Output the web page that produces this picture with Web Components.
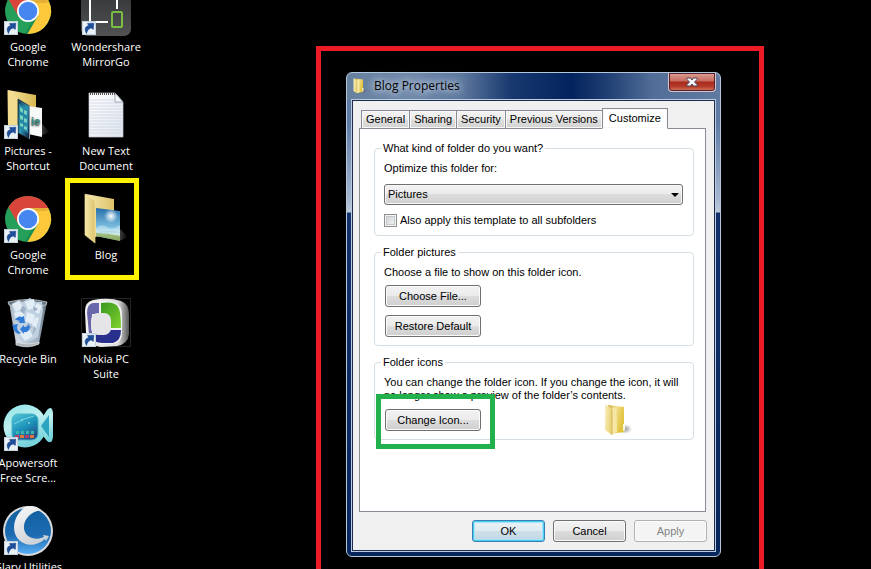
<!DOCTYPE html>
<html lang="en">
<head>
<meta charset="utf-8">
<meta name="viewport" content="width=device-width, initial-scale=1">
<title>Blog Properties</title>
<style>
  body {
    margin: 0;
    background: #000;
    font-family: "Liberation Sans", Arial, sans-serif;
    font-size: 11px;
    line-height: 13px;
    color: #000;
  }
  .windows { position: absolute; left: 346px; top: 72px; width: 375px; }
  mark-box { position: absolute; }
  .mark-dialog { left: 316px; top: 46px; width: 448px; height: 560px; --mark: #ed1c24; }
  .mark-folder { left: 65px; top: 178px; width: 74px; height: 102px; --mark: #fff200; }
  .mark-button { left: 376px; top: 394px; width: 119px; height: 55px; --mark: #22b14c; }
  .check { display: flex; align-items: center; gap: 3px; margin-top: 9px; }
  .check input {
    appearance: none;
    width: 13px;
    height: 13px;
    margin: 0;
    border: 1px solid #8e8f8f;
    background: linear-gradient(135deg, #cbcfd5, #f6f6f6);
    box-shadow: inset 0 0 0 1px #f4f4f4, inset 0 0 0 2px #c3c8ce;
  }
  .stack { display: flex; flex-direction: column; align-items: flex-start; gap: 8px; margin-top: 6px; padding-left: 1px; }
  .row { display: flex; align-items: flex-start; margin-top: 7px; padding-left: 1px; }
  .row folder-preview { margin-left: 123px; margin-top: -5px; margin-bottom: -6px; }
  .text { margin: 0; }
  .row aero-button, .stack aero-button { width: 96px; }
  aero-button[slot="footer"] { width: 73px; }
</style>
</head>
<body>

<desk-top>
  <desk-icon icon="chrome" shortcut>Google<br>Chrome</desk-icon>
  <desk-icon icon="pictures" shortcut>Pictures -<br>Shortcut</desk-icon>
  <desk-icon icon="chrome" shortcut>Google<br>Chrome</desk-icon>
  <desk-icon icon="bin">Recycle Bin</desk-icon>
  <desk-icon icon="apower" shortcut>Apowersoft<br>Free Scre...</desk-icon>
  <desk-icon icon="glary" shortcut>Glary Utilities</desk-icon>
  <desk-icon icon="mirror" shortcut>Wondershare<br>MirrorGo</desk-icon>
  <desk-icon icon="text">New Text<br>Document</desk-icon>
  <desk-icon icon="blog">Blog</desk-icon>
  <desk-icon icon="nokia" shortcut>Nokia PC<br>Suite</desk-icon>

  <aero-window slot="window" class="windows" heading="Blog Properties">
    <tab-strip tabs="General,Sharing,Security,Previous Versions,Customize" active="Customize">
      <group-box legend="What kind of folder do you want?">
        <aero-select options="Pictures,General items,Documents,Music,Videos" label="Optimize this folder for:"></aero-select>
        <label class="check"><input type="checkbox">Also apply this template to all subfolders</label>
      </group-box>
      <group-box legend="Folder pictures">
        <p class="text">Choose a file to show on this folder icon.</p>
        <div class="stack">
          <aero-button>Choose File...</aero-button>
          <aero-button>Restore Default</aero-button>
        </div>
      </group-box>
      <group-box legend="Folder icons">
        <p class="text">You can change the folder icon. If you change the icon, it will<br>no longer show a preview of the folder’s contents.</p>
        <div class="row">
          <aero-button>Change Icon...</aero-button>
          <folder-preview></folder-preview>
        </div>
      </group-box>
    </tab-strip>
    <aero-button slot="footer" kind="default">OK</aero-button>
    <aero-button slot="footer">Cancel</aero-button>
    <aero-button slot="footer" disabled>Apply</aero-button>
  </aero-window>

  <mark-box slot="window" class="mark-dialog"></mark-box>
  <mark-box slot="window" class="mark-folder"></mark-box>
  <mark-box slot="window" class="mark-button"></mark-box>
</desk-top>

<script>
// Plain open folder, used in the title bar and the icon preview
const FOLDER = `
  <defs>
    <linearGradient id="ff" x1="0" x2="1" y2=".3"><stop offset="0" stop-color="#faf0bd"/><stop offset="1" stop-color="#e9d175"/></linearGradient>
    <linearGradient id="fb" x1="0" x2="1" y2=".4"><stop offset="0" stop-color="#cfae4b"/><stop offset=".5" stop-color="#f0dc88"/><stop offset="1" stop-color="#e3c23c"/></linearGradient>
    <radialGradient id="fs"><stop offset="0" stop-color="#555" stop-opacity=".6"/><stop offset="1" stop-color="#555" stop-opacity="0"/></radialGradient>
  </defs>
  <ellipse cx="21" cy="25" rx="7" ry="5" fill="url(#fs)"/>
  <path d="M4 1 20 3V28L7 30Z" fill="url(#fb)"/>
  <path d="M12.500 3 13 28.500 8 30V4Z" fill="#f6e7a4"/>
  <path d="M1 0 8 5V31L1 26Z" fill="url(#ff)"/>
  <path d="M8 5V31" stroke="#c9a94d" stroke-width=".7"/>
  <path d="M19 20h2v6l-2 1z" fill="#fffbe0"/>`;

const BADGE = `
  <path d="M0 35h14v14H0z" fill="#e9f0f6"/>
  <path d="M.5 35.500h13v13H.5z" fill="none" stroke="#c5d2de"/>
  <path d="M4.500 47.500C2 43.500 3.200 40.500 6.600 39.600L5.500 37.500 11.800 37.200 11.300 43.400 9.200 42C6.500 42.500 5.400 44.500 4.500 47.500Z" fill="#1d4f9c" stroke="#123c80" stroke-width=".5"/>`;

const ICONS = {
  chrome: `
    <g transform="translate(24 25)">
      <circle r="23" fill="#25a05a"/>
      <path d="M20.200-11H0L9.530 5.500-.57 23A23 23 0 0 0 20.200-11Z" fill="#fdc93b"/>
      <path d="M20.200-11H0L-9.530 5.500-19.630-12A23 23 0 0 1 20.200-11Z" fill="#d9453a"/>
      <path d="M0-11H20.200L19-8H6Z" fill="#b9802a" opacity=".35"/>
      <path d="M9.530 5.500-.57 23-3 22.500 5 9Z" fill="#0d6b3c" opacity=".35"/>
      <circle r="11" fill="#fff"/><circle r="9.300" fill="#4586f1"/>
    </g>`,
  pictures: `
    <defs>
      <linearGradient id="a" x1="0" x2="1"><stop offset="0" stop-color="#f6e6a0"/><stop offset="1" stop-color="#d8b752"/></linearGradient>
      <linearGradient id="b" x2="1" y2="1"><stop offset="0" stop-color="#12344a"/><stop offset=".5" stop-color="#2f98b5"/><stop offset="1" stop-color="#113"/></linearGradient>
      <linearGradient id="s" x1="0" x2="1"><stop offset="0" stop-color="#444"/><stop offset="1" stop-color="#000"/></linearGradient>
    </defs>
    <path d="M36 32 46 42 36 46Z" fill="url(#s)"/>
    <path d="M4 0 32 5V39H8Z" fill="url(#a)"/>
    <path d="M24 16 38 18V47L24 44Z" fill="#f7f8f8"/>
    <text x="27" y="35" font-family="Liberation Sans" font-size="11" font-weight="bold" fill="#398e81">ie</text>
    <path d="M3.500 0 14 9V48L4 38Z" fill="#f2dc8d"/>
    <path d="M14 9 25.500 16V49L14 43Z" fill="url(#b)" stroke="#222b35" stroke-width=".8"/>
    <path d="m15 14 9 5v24l-9-5z" fill="#2689a8"/>
    <path d="m16 17 3 2v4l-3-2zm4 3 3 1v4l-3-1zm-4 5 3 1v4l-3-1zm4 3 3 1v4l-3-1zm-4 5 3 1v3l-3-1zm4 3 3 1v3l-3-1z" fill="#78d3bd"/>
    <path d="M25.500 16V49" stroke="#9fb3c0" stroke-width=".8"/>`,
  bin: `
    <defs>
      <linearGradient id="a" x1="0" x2="1"><stop offset="0" stop-color="#a3abb2"/><stop offset=".25" stop-color="#d3dde6"/><stop offset=".75" stop-color="#9fb0c0"/><stop offset="1" stop-color="#65727d"/></linearGradient>
    </defs>
    <path d="M5 4H43L35 46Q24 51 12 46Z" fill="url(#a)"/>
    <path d="M4 4Q24-1 43 4L42 7Q24 10 5 7Z" fill="#6a7681" stroke="#c7d0d7" stroke-width=".8"/>
    <path d="M8 6 15 2 18 4 26 0 32 4 38 4 39 12 34 39 26 43 15 42Z" fill="#bfd0e0"/>
    <g fill="#e3edf6"><path d="m8 6 7-3 5 7-8 4zM21 4l9-3 1 9-7 2zM33 5l5 3-3 8-6-3zM10 15l9-3 2 9-8 2zM23 14l8 3-2 9-8-3zM32 19l3 1-3 10-4-3zM16 36l9-5 4 7-8 5z"/></g>
    <g fill="#9db2c8"><path d="m18 8 4 2-2 6-4-3zM29 8l5 3-4 3zM12 23l6-1-2 3zM30 28l2 3-4 7zM24 25l4 4-5 4z"/></g>
    <g fill="#2f7bd6"><path d="M11 22Q14 17 18 19L20 18 21 25 15 25 16 23Q13 22 11 22ZM8 27 14 26 13 29Q13 33 17 35L14 36Q9 33 9 29ZM16 31 20 27 20 29Q24 29 24 26L26 29Q25 35 20 34V36Z"/></g>
    <path d="M12 44Q24 48 35 44V46Q24 51 12 47Z" fill="#aeb5b9" stroke="#e5e8ea" stroke-width=".7"/>`,
  apower: `
    <defs>
      <linearGradient id="a" x2=".4" y2="1"><stop offset="0" stop-color="#8be4e8"/><stop offset=".5" stop-color="#c0efef"/><stop offset="1" stop-color="#78d3dc"/></linearGradient>
      <linearGradient id="b" x2=".6" y2="1"><stop offset="0" stop-color="#54c7d9"/><stop offset=".6" stop-color="#1c91b8"/><stop offset="1" stop-color="#254f87"/></linearGradient>
    </defs>
    <path d="M36 19 43 8Q48 3 49 11V35Q48 43 43 39L36 30Z" fill="url(#a)"/>
    <circle cx="21" cy="24" r="21.500" fill="url(#a)"/>
    <path d="M37 24 45 13V35Z" fill="#2ca4bf"/>
    <rect x="8" y="12" width="26" height="26" rx="6" fill="url(#b)" stroke="#47b8c7"/>
    <path d="M10 22Q20 16 30 14" stroke="#94e9f2" stroke-width=".7" fill="none"/>
    <g fill="#39b6ae"><path d="M12 29h3v3h-3zm5 0h3v3h-3zm5 0h3v3h-3zm5 0h3v3h-3z"/></g>
    <g fill="#b33e70"><path d="M11 33h4v4h-4zm10 0h4v3h-4z"/></g>
    <g fill="#df743d"><path d="M16 33h4v3h-4zm10 0h4v3h-4z"/></g>
    <circle cx="25" cy="21" r=".7" fill="#fff"/><circle cx="18" cy="18" r=".6" fill="#fff"/>`,
  glary: `
    <defs>
      <linearGradient id="a" x2="0" y2="1"><stop offset="0" stop-color="#10609f"/><stop offset=".6" stop-color="#1e6bb2"/><stop offset="1" stop-color="#5aaff5"/></linearGradient>
      <linearGradient id="b" x2=".5" y2="1"><stop offset="0" stop-color="#f9f9f9"/><stop offset="1" stop-color="#cfd2d6"/></linearGradient>
    </defs>
    <circle cx="24" cy="25" r="25" fill="#d9dbdf"/>
    <circle cx="24" cy="25" r="23" fill="url(#a)"/>
    <path d="M21 1Q31-2 37 4C26 6 19 14 20 23 22 32 31 35 40 31L39 29 45 30 42 35 41 33C33 40 22 41 15 34 6 25 10 9 21 1Z" fill="url(#b)"/>`,
  mirror: `
    <defs><linearGradient id="a" x2="0" y2="1"><stop offset="0" stop-color="#303234"/><stop offset="1" stop-color="#505254"/></linearGradient></defs>
    <rect x="-1" y="0" width="50" height="50" rx="7" fill="url(#a)"/>
    <path d="M8 8V36H26M35 8V23" fill="none" stroke="#fff" stroke-width="2"/>
    <rect x="30" y="26" width="10" height="15" rx="1" fill="none" stroke="#79bd43" stroke-width="2"/>`,
  text: `
    <defs><linearGradient id="a" x2="1" y2="1"><stop offset="0" stop-color="#fff"/><stop offset="1" stop-color="#dfe4ee"/></linearGradient></defs>
    <path d="M7 3H33L41 12V47H7Z" fill="url(#a)" stroke="#c2c7ce" stroke-width=".7"/>
    <path d="M8 10H32M8 13H40M8 16H40M8 19H40M8 22H40M8 25H40M8 28H40M8 31H40M8 34H40M8 37H40M8 40H40M8 43H40" stroke="#cdd5e2" stroke-width=".8"/>
    <path d="M33 3V12H41Z" fill="#f7f8fa" stroke="#9299a2" stroke-width=".8"/>
    <path d="M8 4H33" stroke="#555" stroke-width="2" stroke-dasharray="1 1"/>`,
  blog: `
    <defs>
      <linearGradient id="a" x1="0" x2="1"><stop offset="0" stop-color="#f6e9ae"/><stop offset="1" stop-color="#dcc26a"/></linearGradient>
      <linearGradient id="b" x2="0" y2="1"><stop offset="0" stop-color="#286eab"/><stop offset=".6" stop-color="#7fc2e2"/><stop offset=".8" stop-color="#d4ebe5"/><stop offset="1" stop-color="#72944b"/></linearGradient>
      <radialGradient id="c"><stop offset="0" stop-color="#fff"/><stop offset=".3" stop-color="#fff" stop-opacity=".7"/><stop offset="1" stop-color="#fff" stop-opacity="0"/></radialGradient>
      <linearGradient id="s" x1="0" x2="1"><stop offset="0" stop-color="#444"/><stop offset="1" stop-color="#000"/></linearGradient>
    </defs>
    <path d="M37 34 46 43 37 47Z" fill="url(#s)"/>
    <path d="M4 0 32 5V40L12 43Z" fill="url(#a)"/>
    <path d="M14 14 38 17V47L14 42Z" fill="url(#b)"/>
    <circle cx="29" cy="22" r="7" fill="url(#c)"/>
    <path d="M14 34Q20 29 25 33T38 31V38Q28 36 14 38Z" fill="#fff" opacity=".35"/>
    <path d="M14 39Q26 39 38 42V47L14 42Z" fill="#8fae62" opacity=".75"/>
    <path d="M3 0 13 7V49L3 41Z" fill="url(#a)" stroke="#f4df98" stroke-width=".7"/>`,
  nokia: `
    <defs>
      <linearGradient id="a" x1="0" x2="1"><stop offset="0" stop-color="#f5f5f5"/><stop offset=".75" stop-color="#ddd"/><stop offset="1" stop-color="#555"/></linearGradient>
      <linearGradient id="g" x2="1" y2="1"><stop offset="0" stop-color="#38971f"/><stop offset="1" stop-color="#7fd22d"/></linearGradient>
    </defs>
    <rect x="-.5" y=".5" width="49" height="48" fill="#020202" stroke="#242424"/>
    <path d="M11 2Q27-1 39 3 47 6 47 16V36Q46 46 35 48L19 49Q5 47 4 35L3 13Q3 4 11 2Z" fill="url(#a)"/>
    <path d="M12 4Q26 1 34 5 40 8 40 17V35Q40 45 31 46H20Q8 46 7 35L5 14Q5 6 12 4Z" fill="#f2f2f2"/>
    <path d="M17 5V16H10V35L7 36 5 15Q5 6 11 5Z" fill="#6867aa"/>
    <path d="M19 5Q33 3 36 9 39 13 39 30H28V20L19 15Z" fill="url(#g)"/>
    <path d="M39 32Q39 43 31 45H21Q10 45 8 37L14 35 28 32Z" fill="#292f8d"/>
    <rect x="9" y="15" width="20" height="22" rx="7" fill="#e5e5e7"/>`
};

class DeskTop extends HTMLElement {
  constructor() {
    super();
    this.attachShadow({ mode: 'open' }).innerHTML = `
      <style>
        :host { display: flow-root; position: relative; height: 100vh; overflow: hidden; background: #000; }
        .icons {
          display: grid; grid-auto-flow: column; justify-content: start;
          grid-template-rows: repeat(6, 104px); grid-auto-columns: 78px;
          margin: -14px 0 0 -11px;
        }
      </style>
      <nav class="icons" aria-label="Desktop"><slot></slot></nav>
      <slot name="window"></slot>`;
  }
}

class DeskIcon extends HTMLElement {
  connectedCallback() {
    const badge = this.hasAttribute('shortcut') ? BADGE : '';
    this.attachShadow({ mode: 'open' }).innerHTML = `
      <style>
        :host { display: block; font: 11px/15px "Open Sans", "Noto Sans", sans-serif; }
        a {
          display: flex; flex-direction: column; align-items: center; gap: 5px;
          color: #fff; text-decoration: none; text-align: center; white-space: nowrap;
          text-shadow: 0 1px 2px #000;
        }
        svg { width: 48px; height: 48px; overflow: visible; }
      </style>
      <a href="#">
        <svg viewBox="0 0 48 48" aria-hidden="true">${ICONS[this.getAttribute('icon')]}${badge}</svg>
        <span><slot></slot></span>
      </a>`;
  }
}

class AeroWindow extends HTMLElement {
  connectedCallback() {
    this.attachShadow({ mode: 'open' }).innerHTML = `
      <style>
        :host {
          display: block; box-sizing: border-box; padding: 0 4px 4px;
          border: 1px solid #b4c7dc; border-radius: 6px;
          background:
            linear-gradient(90deg, #66809f 0, #7189a9 18%, #5c769c 31%, #18396f 44%, #02235d 60%, #203f73 70%, #526e98 82%, #607aa1 100%) 0 0 / 100% 27px no-repeat,
            linear-gradient(#607aa1 0, #5f7ba5 50px, #a4b5cf 125px, #bccadb 139px, #12306a 140px, #07265c 100%);
        }
        header { display: flex; align-items: center; height: 26px; }
        header svg { width: 14px; height: 16px; margin-left: 2px; }
        h1 {
          margin: 0 auto 0 0; padding: 0 7px; font: 12px/18px "Open Sans", "Noto Sans", sans-serif;
          text-shadow: 0 0 6px #c7d5e5, 0 0 8px #b9c9dd, 0 0 12px #a9bdd4;
        }
        .close {
          align-self: flex-start; width: 48px; height: 19px; padding: 0;
          border: 1px solid #d8c3c8; border-top: 0; border-radius: 0 0 4px 4px;
          background: linear-gradient(#dda096 0, #c8695c 45%, #a82a1c 50%, #b43b29 75%, #d47b62 100%);
          box-shadow: inset 0 0 0 1px #54212b;
        }
        .close svg { display: block; width: 12px; height: 10px; margin: 0 auto; }
        .client {
          border: 1px solid #1c2c4a; outline: 1px solid #b9cce2;
          background: #f0f0f0; padding: 7px 8px 8px 6px; margin: 1px;
        }
        footer { display: flex; justify-content: flex-end; gap: 8px; margin: 8px -1px 0 0; }
      </style>
      <section role="dialog" aria-label="${this.getAttribute('heading')}">
        <header>
          <svg viewBox="0 0 28 32" aria-hidden="true">${FOLDER}</svg>
          <h1>${this.getAttribute('heading')}</h1>
          <button class="close" type="button" aria-label="Close">
            <svg viewBox="0 0 12 10" aria-hidden="true"><path d="M1 1H4.500L6 3 7.500 1H11V2.500L8.500 5 11 7.500V9H7.500L6 7 4.500 9H1V7.500L3.500 5 1 2.500Z" fill="#f5f5f8" stroke="#4c4658"/></svg>
          </button>
        </header>
        <div class="client">
          <slot></slot>
          <footer><slot name="footer"></slot></footer>
        </div>
      </section>`;
  }
}

class TabStrip extends HTMLElement {
  connectedCallback() {
    const active = this.getAttribute('active');
    const tabs = this.getAttribute('tabs').split(',').map(name =>
      `<button type="button" role="tab" aria-selected="${name === active}">${name}</button>`).join('');
    this.attachShadow({ mode: 'open' }).innerHTML = `
      <style>
        :host { display: block; }
        .tabs { display: flex; align-items: flex-end; padding-left: 2px; margin-bottom: -1px; position: relative; }
        button {
          height: 19px; padding: 0 4px; font: inherit; color: inherit; white-space: nowrap;
          border: 1px solid #898c95; border-right-width: 0;
          background: linear-gradient(#f3f3f3 0, #ebebeb 48%, #dedede 52%, #d2d2d2 100%);
          box-shadow: inset 0 0 0 1px #f8f8f8;
        }
        button[aria-selected="true"] {
          height: 21px; padding: 0 6px; border-right-width: 1px; border-bottom-color: #fff; background: #fff;
        }
        .panel {
          display: flex; flex-direction: column; gap: 10px;
          padding: 13px 11px 71px 14px; border: 1px solid #898c95; background: #fff;
        }
      </style>
      <div class="tabs" role="tablist">${tabs}</div>
      <div class="panel" role="tabpanel"><slot></slot></div>`;
  }
}

class GroupBox extends HTMLElement {
  connectedCallback() {
    this.attachShadow({ mode: 'open' }).innerHTML = `
      <style>
        :host { display: block; }
        fieldset {
          min-width: 0; margin: 0; padding: 7px 10px 8px 9px;
          border: 1px solid #d5dfe5; border-radius: 4px;
        }
        legend { margin-left: -3px; padding: 0 2px; }
      </style>
      <fieldset><legend>${this.getAttribute('legend')}</legend><slot></slot></fieldset>`;
  }
}

class AeroButton extends HTMLElement {
  connectedCallback() {
    const disabled = this.hasAttribute('disabled') ? 'disabled' : '';
    this.attachShadow({ mode: 'open' }).innerHTML = `
      <style>
        :host { display: block; }
        button {
          display: block; width: 100%; height: 22px; padding: 0;
          font: inherit; color: #000; border: 1px solid #707070; border-radius: 3px;
          background: linear-gradient(#f2f2f2 0, #ebebeb 49%, #dddddd 50%, #cfcfcf 100%);
          box-shadow: inset 0 0 0 1px #fbfbfb;
        }
        :host([kind="default"]) button {
          border-color: #3c7fb1;
          background: linear-gradient(#eaf2f6 0, #dfebf1 49%, #cddfe9 50%, #c2d8e4 100%);
          box-shadow: inset 0 0 0 1px #48cdf4, inset 0 0 0 2px #a5e3f6;
        }
        button:disabled { color: #838383; border-color: #adb2b5; background: #f4f4f4; }
      </style>
      <button type="button" ${disabled}><slot></slot></button>`;
  }
}

class AeroSelect extends HTMLElement {
  connectedCallback() {
    const options = this.getAttribute('options').split(',').map(o => `<option>${o}</option>`).join('');
    this.attachShadow({ mode: 'open' }).innerHTML = `
      <style>
        :host { display: block; }
        label { display: block; margin-bottom: 9px; }
        .box { display: grid; align-items: center; }
        select, svg { grid-area: 1 / 1; }
        select {
          appearance: none; width: 100%; height: 21px; padding: 0 3px; margin: 0;
          font: inherit; color: #000; border: 1px solid #707070; border-radius: 3px;
          background: linear-gradient(#f2f2f2 0, #ebebeb 49%, #dddddd 50%, #cfcfcf 100%);
          box-shadow: inset 0 0 0 1px #f8f8f8;
        }
        svg { justify-self: end; width: 8px; height: 4px; margin-right: 4px; pointer-events: none; }
      </style>
      <label for="field">${this.getAttribute('label')}</label>
      <div class="box">
        <select id="field">${options}</select>
        <svg viewBox="0 0 8 4" aria-hidden="true"><path d="M0 0H8L4 4Z"/></svg>
      </div>`;
  }
}

class FolderPreview extends HTMLElement {
  constructor() {
    super();
    this.attachShadow({ mode: 'open' }).innerHTML = `
      <style>:host { display: block; } svg { display: block; width: 28px; height: 32px; }</style>
      <svg viewBox="0 0 28 32" role="img" aria-label="Folder">${FOLDER}</svg>`;
  }
}

class MarkBox extends HTMLElement {
  constructor() {
    super();
    this.attachShadow({ mode: 'open' }).innerHTML = `
      <style>:host { display: block; box-sizing: border-box; border: 5px solid var(--mark); pointer-events: none; }</style>`;
  }
}

customElements.define('desk-top', DeskTop);
customElements.define('desk-icon', DeskIcon);
customElements.define('aero-window', AeroWindow);
customElements.define('tab-strip', TabStrip);
customElements.define('group-box', GroupBox);
customElements.define('aero-button', AeroButton);
customElements.define('aero-select', AeroSelect);
customElements.define('folder-preview', FolderPreview);
customElements.define('mark-box', MarkBox);
</script>
</body>
</html>
